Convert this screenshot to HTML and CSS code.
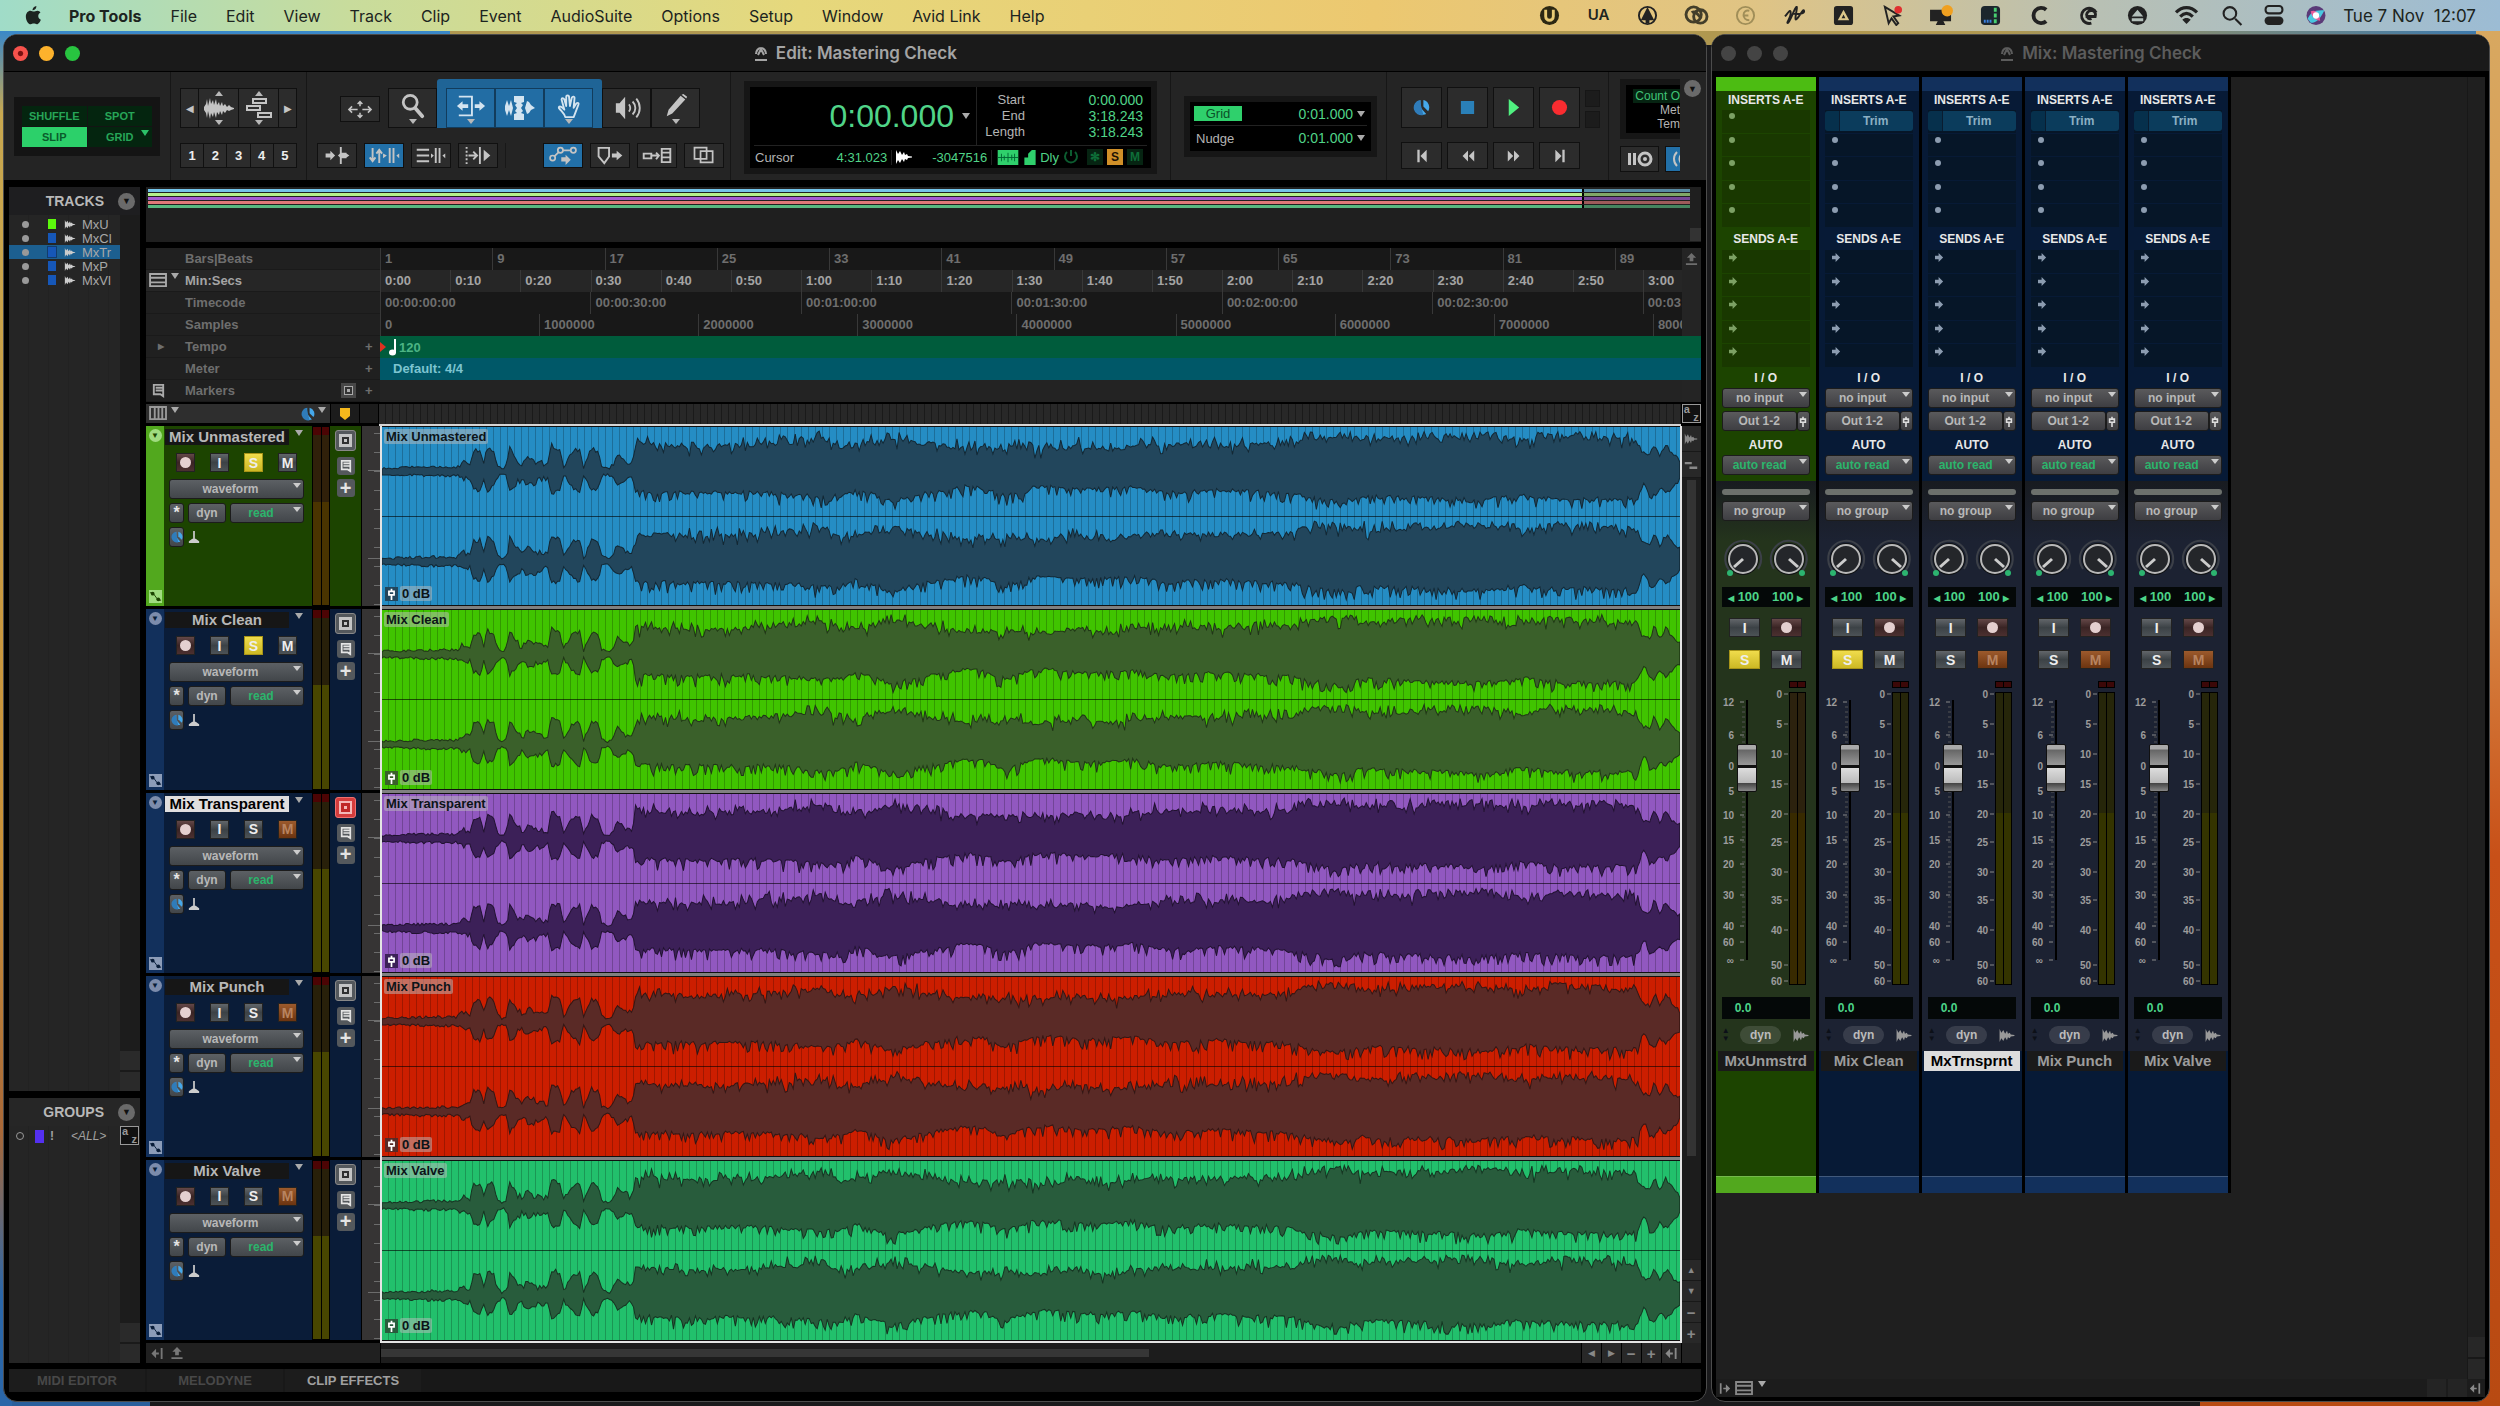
FILE: index.html
```html
<!DOCTYPE html>
<html lang="en">
<head>
    <meta charset="utf-8">
    <title>Pro Tools</title>
    <link rel="stylesheet" href="styles.css">
</head>
<body>
    <!-- Icon sprite -->
    <svg class="sprite" aria-hidden="true">
        <symbol id="apple" viewBox="0 0 18 22"><path fill="currentColor" d="M12.5 1c.1 1.600-.5 2.700-1.300 3.500-.8.8-1.800 1.200-2.700 1.100-.1-1.300.5-2.500 1.300-3.300C10.500 1.600 11.600 1.100 12.500 1zM16.800 7.800c-1.500.9-2.300 2.100-2.300 3.700 0 1.900 1 3.200 2.700 3.900-.6 1.700-2.400 4.800-4.200 4.800-1.100 0-1.800-.7-3.200-.7s-2.100.7-3.200.7C4.200 20.200 1.500 16 1.500 12.200c0-3.900 2.300-6.200 4.800-6.200 1.400 0 2.500.9 3.500.9.900 0 2.200-1 4-1 1.200 0 2.300.8 3 1.900z"/></symbol>
        <symbol id="wave" viewBox="0 0 30 22"><path fill="currentColor" d="M0 10l2-3 1-5 1 7 2-8 1 6 2-4 1 5 2-6 1 6 2-3 1 4 2-4 1 4 2-2 2 3 2-2 2 2 3 1v1l-3 1-2 1-2-1-2 3-2-2-1 4-2-4-1 4-2-3-1 6-2-6-1 5-2-4-1 6-2-8-1 7-1-5-2-3z"/></symbol>
        <symbol id="clip-wave" viewBox="0 0 18 14"><path fill="currentColor" d="M1 0l2 4 2-3 2 4 2-3 1 3 2-1 1 2 4 .5v1l-4 .5-1 2-2-1-1 3-2-3-2 4-2-3-2 4z"/></symbol>
        <symbol id="midi" viewBox="0 0 28 24"><path fill="none" stroke="currentColor" stroke-width="2" d="M8 3h13v4H8zM2 10h13v4H2zM13 17h13v4H13z"/></symbol>
        <symbol id="move" viewBox="0 0 32 24"><path fill="none" stroke="currentColor" stroke-width="2" d="M2 12h11M19 12h11M6 8l-4 4 4 4M26 8l4 4-4 4M16 2v6M16 16v6M13 5l3-3 3 3M13 19l3 3 3-3"/></symbol>
        <symbol id="magnify" viewBox="0 0 28 28"><circle cx="11" cy="10" r="7.500" fill="none" stroke="currentColor" stroke-width="3"/><path stroke="currentColor" stroke-width="4" stroke-linecap="round" d="M17 17l7 8"/></symbol>
        <symbol id="trim" viewBox="0 0 32 26"><path fill="none" stroke="currentColor" stroke-width="2" d="M3 3h14v20H3"/><path fill="currentColor" d="M1 13l6-5v3h6v4H7v3zM31 13l-6-5v3h-5v4h5v3z"/></symbol>
        <symbol id="selector" viewBox="0 0 30 26"><path fill="currentColor" d="M0 11l2-6 2 6 2-6 2 8-2 8-2-6-2 6-2-6zM30 13l-4-3-2-3-2-1-2 7 2 6 2-1 2-3z"/><path fill="currentColor" d="M9 1h10v6l-3 1 2 2-2 3 2 3-2 2 3 1v6H9v-6l3-1-2-2 2-3-2-3 2-2-3-1z"/></symbol>
        <symbol id="hand" viewBox="0 0 26 28"><path fill="none" stroke="currentColor" stroke-width="2" stroke-linejoin="round" stroke-linecap="round" d="M9 26c-1-4-4-6-7-10 0-2 2-2 4 0l2 2L5 7c0-2 2-2 3 0l2 7V4c0-2 3-2 3 0l1 10 2-9c1-2 3-1 3 0l-1 11 3-5c2-1 3 0 2 2-2 5-3 8-5 13z"/></symbol>
        <symbol id="speaker" viewBox="0 0 30 28"><path fill="currentColor" d="M3 9h4l6-7v24l-6-7H3z"/><path fill="none" stroke="currentColor" stroke-width="2" d="M17 10c2 2 2 6 0 8M21 7c4 4 4 10 0 14M25 4c5 6 5 14 0 20"/></symbol>
        <symbol id="pencil" viewBox="0 0 26 28"><path fill="currentColor" d="M3 25l2-7L18 3l5 4L9 22zM19 2l2-1 4 3-1 2z"/></symbol>
        <symbol id="trans" viewBox="0 0 26 20"><path fill="currentColor" d="M1 8h5V5l5 5-5 5v-3H1zM16 1h2v18h-2z"/><path fill="currentColor" d="M14 10l3-3h6v1l3 2-3 2v1h-6z"/></symbol>
        <symbol id="link-tl" viewBox="0 0 32 20"><path fill="none" stroke="currentColor" stroke-width="2" d="M4 2v13M1 12l3 4 3-4M11 18V4M8 8l3-4 3 4M22 2v16M26 2v16"/><path fill="currentColor" d="M15 8l4 2-4 3zM32 8l-3 2 3 3z"/></symbol>
        <symbol id="link-tr" viewBox="0 0 32 20"><path fill="none" stroke="currentColor" stroke-width="2" d="M1 4h13M1 10h13M1 16h13M21 2v16M25 2v16"/><path fill="currentColor" d="M16 8l3 2-3 3zM31 8l-3 2 3 3z"/></symbol>
        <symbol id="insert-follow" viewBox="0 0 28 20"><path fill="none" stroke="currentColor" stroke-width="2" d="M2 1v18" stroke-dasharray="2 2"/><path fill="none" stroke="currentColor" stroke-width="2" d="M4 10h8M9 6l4 4-4 4M16 1v18"/><path fill="currentColor" d="M20 4l7 6-7 6z"/></symbol>
        <symbol id="auto-follow" viewBox="0 0 32 22"><g fill="none" stroke="currentColor" stroke-width="2"><circle cx="4" cy="14" r="3"/><circle cx="13" cy="5" r="3"/><circle cx="28" cy="5" r="3"/><path d="M6 12l5-5M16 5h9"/></g><path fill="currentColor" d="M14 13h5v-3l6 6-6 6v-4h-5z"/></symbol>
        <symbol id="marker-follow" viewBox="0 0 28 20"><path fill="none" stroke="currentColor" stroke-width="2" d="M2 2h11v9l-5 7-6-7z"/><path fill="currentColor" d="M16 8h5V5l6 5-6 5v-3h-5z"/></symbol>
        <symbol id="mirror" viewBox="0 0 30 20"><path fill="none" stroke="currentColor" stroke-width="2" d="M1 8h8v5H1zM10 10h7M14 7l3 3-3 4M20 3h9v4h-9zM20 7h9v5h-9zM20 12h9v5h-9z"/></symbol>
        <symbol id="layer" viewBox="0 0 26 22"><path fill="none" stroke="currentColor" stroke-width="2" d="M2 2h14v13H2zM9 6h14v13H9z"/></symbol>
        <symbol id="clock" viewBox="0 0 18 18"><path fill="#45a8ea" d="M8 1v8l6 7A8 8 0 0 1 8 1z"/><path fill="#2f7cba" d="M7 1a8 8 0 0 0 4 16z"/><path fill="#45a8ea" d="M11 1a8 8 0 0 1 5 12l-5-5z"/></symbol>
        <symbol id="to-start" viewBox="0 0 18 18"><path fill="currentColor" d="M3 1h3v16H3zM15 1v16L7 9z"/></symbol>
        <symbol id="rewind" viewBox="0 0 18 18"><path fill="currentColor" d="M9 2v14L2 9zM17 2v14l-7-7z"/></symbol>
        <symbol id="metro" viewBox="0 0 14 16"><path fill="currentColor" d="M6 1h2v9h1l4 3v2H1v-2l4-3h1z"/></symbol>
        <symbol id="comment" viewBox="0 0 14 16"><path fill="none" stroke="currentColor" stroke-width="2" d="M2 2h10v12l-3-2H2zM4 5h7M4 8h7"/></symbol>
        <symbol id="fader" viewBox="0 0 10 14"><path fill="none" stroke="currentColor" stroke-width="2" d="M5 1v3M5 8v6M2 4h6v4H2z"/></symbol>
        <symbol id="automation" viewBox="0 0 14 14"><path fill="none" stroke="currentColor" stroke-width="1" d="M1 3h3l6 8h3"/><circle cx="4" cy="4" r="2" fill="currentColor"/><circle cx="10" cy="10" r="2" fill="currentColor"/></symbol>
        <symbol id="rows" viewBox="0 0 20 16"><path fill="none" stroke="currentColor" stroke-width="2" d="M1 1h17v13H1zM1 5h17M1 10h17"/></symbol>
        <symbol id="cols" viewBox="0 0 20 16"><path fill="none" stroke="currentColor" stroke-width="2" d="M1 1h17v13H1zM6 1v13M10 1v13M14 1v13"/></symbol>
        <symbol id="upload" viewBox="0 0 14 14"><path fill="currentColor" d="M7 0l5 5H9v4H5V5H2zM1 11h12v2H1z"/></symbol>
        <symbol id="edge" viewBox="0 0 14 14"><path fill="currentColor" d="M1 7l5-5v4h3v2H6v4zM11 1h2v12h-2z"/></symbol>
        <symbol id="send" viewBox="0 0 10 10"><path fill="currentColor" d="M0 3h4V0l5 5-5 5V7H0z"/></symbol>
        <symbol id="app" viewBox="0 0 16 20"><path fill="none" stroke="currentColor" stroke-width="2" d="M3 11a5 6 0 1 1 10 0M5 12l3-6 3 6"/><path fill="currentColor" d="M2 16h12v2H2z"/></symbol>
    </svg>

    <header class="menubar">
        <nav class="menus">
            <a href="#" class="apple" aria-label="Apple"><svg><use href="#apple"/></svg></a>
            <a href="#" class="app-name">Pro Tools</a>
            <a href="#">File</a>
            <a href="#">Edit</a>
            <a href="#">View</a>
            <a href="#">Track</a>
            <a href="#">Clip</a>
            <a href="#">Event</a>
            <a href="#">AudioSuite</a>
            <a href="#">Options</a>
            <a href="#">Setup</a>
            <a href="#">Window</a>
            <a href="#">Avid Link</a>
            <a href="#">Help</a>
        </nav>
        <div class="status">
            <svg viewBox="0 0 22 22"><circle cx="11" cy="11" r="10" fill="#2c2813"/><path d="M7 5v7a4 4 0 0 0 8 0V5" fill="none" stroke="#e8ca74" stroke-width="3"/></svg>
            <b>UA</b>
            <svg viewBox="0 0 22 22"><circle cx="11" cy="11" r="9" fill="none" stroke="#222" stroke-width="2"/><path d="M11 2l7 14h-5v3H9v-3H4z" fill="#222"/></svg>
            <svg viewBox="0 0 26 22"><g fill="none" stroke="#433e2a" stroke-width="3"><circle cx="10" cy="10" r="8"/><circle cx="17" cy="12" r="7"/><path d="M8 8c4-3 7 3 10 6"/></g></svg>
            <svg viewBox="0 0 22 22"><g fill="none" stroke="#a08e58" stroke-width="2"><circle cx="11" cy="11" r="9"/><path d="M15 6c-8-2-8 10 0 10M8 11h6"/></g></svg>
            <svg viewBox="0 0 24 22"><path d="M2 12c5-6 6-8 6-3s-5 10-3 10 7-16 9-17-3 15 0 13 7-12 8-9-5 4-12 3" fill="none" stroke="#222" stroke-width="2"/></svg>
            <svg viewBox="0 0 22 22"><rect x="1" y="1" width="20" height="20" rx="3" fill="#222"/><path d="M11 5l6 11H5z" fill="#dcc78a"/><path d="M11 10l2 4H9z" fill="#222"/></svg>
            <svg viewBox="0 0 22 22"><path d="M3 2l15 9-6 1 5 7-2 2-5-7-3 5z" fill="none" stroke="#222" stroke-width="2"/><circle cx="17" cy="5" r="4" fill="#e03030"/></svg>
            <svg viewBox="0 0 26 22"><path d="M1 5h22v12H1zM9 17h6l2 4H7z" fill="#222"/><circle cx="19" cy="6" r="6" fill="#f0a020"/></svg>
            <svg viewBox="0 0 22 22"><rect x="1" y="1" width="20" height="20" rx="4" fill="#1c262c"/><path d="M16 3v4M16 9v4M16 15v4" stroke="#48d070" stroke-width="3"/><path d="M4 17h8" stroke="#3a80e0" stroke-width="3" stroke-dasharray="2 1"/></svg>
            <svg viewBox="0 0 22 22"><path d="M18 5a8 8 0 1 0 0 12" fill="none" stroke="#222" stroke-width="4"/></svg>
            <svg viewBox="0 0 22 22"><path d="M19 8a8 8 0 1 0-5 11M8 12h10c2-8-8-8-9-2 0 4 3 5 5 4" fill="none" stroke="#222" stroke-width="3"/></svg>
            <svg viewBox="0 0 22 22"><circle cx="11" cy="11" r="10" fill="#222"/><path d="M11 5l6 7H5zM5 14h12v3H5z" fill="#b4c0bb"/></svg>
            <svg viewBox="0 0 24 20"><path d="M2 7c6-6 14-6 20 0M6 11c4-4 8-4 12 0" fill="none" stroke="#222" stroke-width="3"/><path d="M12 18l-4-4c2-2 6-2 8 0z" fill="#222"/></svg>
            <svg class="near" viewBox="0 0 20 20"><circle cx="8" cy="8" r="6" fill="none" stroke="#222" stroke-width="2"/><path d="M13 13l6 6" stroke="#222" stroke-width="2"/></svg>
            <svg class="near" viewBox="0 0 20 20"><rect x="2" y="1" width="16" height="7" rx="3" fill="none" stroke="#222" stroke-width="2"/><rect x="1" y="11" width="18" height="8" rx="4" fill="#222"/></svg>
            <svg class="near" viewBox="0 0 20 20"><circle cx="10" cy="10" r="9" fill="#5a3a78"/><path d="M2 13c4-8 8-8 16-8-4 8-7 12-13 12z" fill="#48c8e0"/><path d="M5 6c5-2 8 2 9 9-4 0-8-3-9-9z" fill="#e85a9a"/><circle cx="10" cy="10" r="3" fill="#fff"/></svg>
            <time>Tue 7 Nov&nbsp; 12:07</time>
        </div>
    </header>

    <main class="desktop">
        <section class="window edit-window">
            <div class="titlebar">
                <div class="lights"><i class="close"></i><i class="min"></i><i class="max"></i></div>
                <h1><svg><use href="#app"/></svg>Edit: Mastering Check</h1>
            </div>

            <div class="toolbar">
                <div class="group modes">
                    <div class="mode-grid">
                        <button>SHUFFLE</button>
                        <button>SPOT</button>
                        <button class="on">SLIP</button>
                        <button class="arrow">GRID</button>
                    </div>
                </div>

                <div class="group zoom">
                    <div class="zoom-row">
                        <button aria-label="Zoom out">◀</button>
                        <button class="big" aria-label="Audio zoom"><svg><use href="#wave"/></svg></button>
                        <button class="big" aria-label="MIDI zoom"><svg><use href="#midi"/></svg></button>
                        <button aria-label="Zoom in">▶</button>
                    </div>
                    <div class="presets">
                        <button>1</button><button>2</button><button>3</button><button>4</button><button>5</button>
                    </div>
                </div>

                <div class="group tools">
                    <div class="tool-row">
                        <button class="move" aria-label="Zoom toggle"><svg><use href="#move"/></svg></button>
                        <button class="tool drop" aria-label="Zoomer"><svg><use href="#magnify"/></svg></button>
                        <div class="smart">
                            <button class="tool drop" aria-label="Trim"><svg><use href="#trim"/></svg></button>
                            <button class="tool" aria-label="Selector"><svg><use href="#selector"/></svg></button>
                            <button class="tool drop" aria-label="Grabber"><svg><use href="#hand"/></svg></button>
                        </div>
                        <button class="tool" aria-label="Scrubber"><svg><use href="#speaker"/></svg></button>
                        <button class="tool drop" aria-label="Pencil"><svg><use href="#pencil"/></svg></button>
                    </div>
                    <div class="option-row">
                        <button aria-label="Tab to transients"><svg><use href="#trans"/></svg></button>
                        <button class="on" aria-label="Link timeline"><svg><use href="#link-tl"/></svg></button>
                        <button aria-label="Link track"><svg><use href="#link-tr"/></svg></button>
                        <button aria-label="Insertion follows playback"><svg><use href="#insert-follow"/></svg></button>
                        <i class="split"></i>
                        <button class="on" aria-label="Automation follows edit"><svg><use href="#auto-follow"/></svg></button>
                        <button aria-label="Markers follow edit"><svg><use href="#marker-follow"/></svg></button>
                        <button aria-label="Mirrored editing"><svg><use href="#mirror"/></svg></button>
                        <button aria-label="Layered editing"><svg><use href="#layer"/></svg></button>
                    </div>
                </div>

                <div class="group counters">
                    <div class="lcd counter">
                        <div class="counter-top">
                            <div class="main-count">0:00.000<i class="tri"></i></div>
                            <dl>
                                <dt>Start</dt><dd>0:00.000</dd>
                                <dt>End</dt><dd>3:18.243</dd>
                                <dt>Length</dt><dd>3:18.243</dd>
                            </dl>
                        </div>
                        <div class="counter-bottom">
                            <span class="cur">Cursor</span>
                            <span class="cur-time">4:31.023</span>
                            <svg class="cur-wave"><use href="#clip-wave"/></svg>
                            <span class="cur-value">-3047516</span>
                            <svg class="chip-wave" viewBox="0 0 22 16"><path fill="#2fd06c" d="M0 0h22v16H0z"/><path stroke="#063" d="M0 8h22M4 4v8M7 6v5M11 3v10M15 5v6M18 4v8"/></svg>
                            <svg class="chip-note" viewBox="0 0 12 16"><path fill="#2fd06c" d="M0 8h4V4L8 0h4v16H0z"/></svg>
                            <span>Dly</span>
                            <svg class="chip-ring" viewBox="0 0 16 16"><path fill="none" stroke="#0c5c30" stroke-width="2" d="M4 3a6 6 0 1 0 8 0M8 1v6"/></svg>
                            <span class="chip dim">✻</span>
                            <span class="chip solo">S</span>
                            <span class="chip dim">M</span>
                        </div>
                    </div>
                </div>

                <div class="group gridnudge">
                    <div class="lcd gn">
                        <div class="gn-row"><button class="grid-on">Grid</button><span>0:01.000<i class="tri"></i></span></div>
                        <div class="gn-row"><em>Nudge</em><span>0:01.000<i class="tri"></i></span></div>
                    </div>
                </div>

                <div class="group transport">
                    <div class="transport-row">
                        <button aria-label="Online"><svg><use href="#clock"/></svg></button>
                        <button aria-label="Stop"><svg viewBox="0 0 18 18"><path fill="#2a80b8" d="M2 2h14v14H2z"/></svg></button>
                        <button aria-label="Play"><svg viewBox="0 0 18 18"><path fill="#50f080" d="M4 0l11 9-11 9z"/></svg></button>
                        <button aria-label="Record"><svg viewBox="0 0 18 18"><circle cx="9" cy="9" r="8" fill="#fa2c30"/></svg></button>
                        <div class="lamps"><i></i><i></i></div>
                    </div>
                    <div class="transport-row low">
                        <button aria-label="Return to zero"><svg><use href="#to-start"/></svg></button>
                        <button aria-label="Rewind"><svg><use href="#rewind"/></svg></button>
                        <button class="flip" aria-label="Fast forward"><svg><use href="#rewind"/></svg></button>
                        <button class="flip" aria-label="Go to end"><svg><use href="#to-start"/></svg></button>
                    </div>
                </div>

                <div class="group countoff">
                    <div class="count-clip">
                        <div class="count-lcd">
                            <span class="lit">Count O</span>
                            <span>Met</span>
                            <span>Tem</span>
                        </div>
                        <div class="count-row">
                            <button aria-label="Wait for note"><svg viewBox="0 0 26 18"><path fill="currentColor" d="M1 3h3v12H1zM6 3h3v12H6z"/><circle cx="18" cy="9" r="6" fill="none" stroke="currentColor" stroke-width="3"/><circle cx="18" cy="9" r="2" fill="currentColor"/></svg></button>
                            <button class="on" aria-label="Metronome"><svg viewBox="0 0 26 18"><path fill="none" stroke="currentColor" stroke-width="2" d="M5 2c-4 4-4 10 0 14M9 5c-2 2-2 6 0 8"/></svg></button>
                        </div>
                    </div>
                    <button class="round" aria-label="Toolbar menu">▼</button>
                </div>
            </div>

            <div class="edit-body">
                <aside class="sidebar">
                    <div class="panel tracks-panel">
                        <h2>TRACKS<button class="round" aria-label="Tracks menu">▼</button></h2>
                        <div class="panel-body">
                            <ul id="trackList"></ul>
                            <div class="rail"><i></i></div>
                        </div>
                    </div>
                    <div class="panel groups-panel">
                        <h2>GROUPS<button class="round" aria-label="Groups menu">▼</button></h2>
                        <div class="panel-body">
                            <ul>
                                <li class="group-item"><i class="ring"></i><i class="swatch"></i><b>!</b><em>&lt;ALL&gt;</em></li>
                            </ul>
                            <div class="rail"><span class="az"><b>a</b><b>z</b></span><i></i></div>
                        </div>
                    </div>
                </aside>

                <div class="timeline">
                    <div class="universe">
                        <div class="bands"><i></i><i></i><i></i><i></i><i></i></div>
                        <b></b>
                    </div>

                    <div class="rulers" id="rulers"></div>

                    <div class="strip-head">
                        <div class="view-cell"><svg><use href="#cols"/></svg><i class="tri"></i><svg class="clk"><use href="#clock"/></svg><i class="tri"></i></div>
                        <div class="marker-cell"><svg viewBox="0 0 12 14"><path fill="#f5b81c" d="M1 1h10v8l-5 4-5-4z"/></svg></div>
                        <div class="blank-cell"></div>
                        <div class="beat-cell"></div>
                        <span class="az"><b>a</b><b>z</b></span>
                    </div>

                    <div class="lanes">
                        <div class="tracks" id="tracks"></div>
                        <div class="vscroll">
                            <button aria-label="Waveform zoom"><svg><use href="#clip-wave"/></svg></button>
                            <button aria-label="MIDI height"><svg viewBox="0 0 18 14"><path fill="currentColor" d="M1 3h9v3H1zM7 9h10v3H7z"/></svg></button>
                            <div class="vtrack"><i></i></div>
                            <button aria-label="Scroll up">▲</button>
                            <button aria-label="Scroll down">▼</button>
                            <button class="sign" aria-label="Shrink">−</button>
                            <button class="sign" aria-label="Grow">+</button>
                        </div>
                    </div>

                    <div class="hscroll">
                        <div class="hleft"><svg><use href="#edge"/></svg><svg><use href="#upload"/></svg></div>
                        <div class="htrack"><i></i></div>
                        <button aria-label="Scroll left">◀</button>
                        <button aria-label="Scroll right">▶</button>
                        <button class="sign" aria-label="Zoom out">−</button>
                        <button class="sign" aria-label="Zoom in">+</button>
                        <button aria-label="Hide"><svg><use href="#edge"/></svg></button>
                        <i class="corner"></i>
                    </div>
                </div>
            </div>

            <div class="tabs">
                <button>MIDI EDITOR</button>
                <button>MELODYNE</button>
                <button class="on">CLIP EFFECTS</button>
            </div>
        </section>

        <section class="window mix-window">
            <div class="titlebar dim">
                <div class="lights"><i></i><i></i><i></i></div>
                <h1><svg><use href="#app"/></svg>Mix: Mastering Check</h1>
            </div>
            <div class="mix-body">
                <div class="strips" id="strips"></div>
                <div class="mix-rail"><i></i></div>
            </div>
            <div class="mix-foot">
                <svg class="flip"><use href="#edge"/></svg>
                <svg class="list"><use href="#rows"/></svg><i class="tri"></i>
                <div class="foot-end"><i></i><i></i><svg><use href="#edge"/></svg></div>
            </div>
        </section>
    </main>

    <script src="script.js"></script>
</body>
</html>
```

FILE: styles.css
```css
* {
    box-sizing: border-box;
}

body {
    margin: 0;
    height: 100vh;
    display: flex;
    flex-direction: column;
    overflow: hidden;
    font-family: "Liberation Sans", Arial, sans-serif;
    font-size: 12px;
    color: #a8a8a8;
    background: linear-gradient(to right, #2a5f9c 6%, #1a1a1c 6%, #1a1a1c 88%, #b84a12 88%);
}

h1, h2, ul, dl, dd {
    margin: 0;
    padding: 0;
}

ul {
    list-style: none;
}

button, select, input {
    font: inherit;
    color: inherit;
    margin: 0;
    padding: 0;
    border: 0;
    background: none;
    border-radius: 0;
    appearance: none;
}

button {
    display: flex;
    align-items: center;
    justify-content: center;
}

i, em {
    font-style: normal;
}

.sprite {
    position: absolute;
    width: 0;
    height: 0;
}

.tri {
    display: inline-block;
    border: 4px solid transparent;
    border-top: 6px solid #aaa;
    border-bottom: 0;
}

.round {
    width: 17px;
    height: 17px;
    border-radius: 50%;
    background: #6a6a6a;
    color: #111;
    font-size: 9px;
}

/* menu bar */
.menubar {
    height: 31px;
    flex: none;
    display: flex;
    justify-content: space-between;
    align-items: center;
    padding: 0 24px;
    font-family: Inter, sans-serif;
    font-size: 16px;
    color: #1c2420;
    background: linear-gradient(to right, #a0dcc8, #c8dc9c 14%, #e6d87c 32%, #ecc870 55%, #e0c484 70%, #b8c0b4 84%, #9cbcd4);
}

.menus {
    display: flex;
    align-items: center;
    gap: 29px;
}

.menus a {
    color: inherit;
    text-decoration: none;
}

.apple {
    width: 16px;
}

.apple svg {
    display: block;
    width: 18px;
    height: 21px;
}

.app-name {
    font-weight: 700;
}

.status {
    display: flex;
    align-items: center;
    font-size: 15px;
}

.status svg,
.status b {
    width: 49px;
    height: 21px;
    text-align: center;
    font-weight: 600;
}

.status .near {
    width: 42px;
}

.status time {
    margin-left: 6px;
    font-size: 17px;
}

/* windows */
.desktop {
    flex: 1;
    min-height: 0;
    display: grid;
    grid-template-columns: 1703fr 779fr;
    gap: 4px;
    padding: 3px 10px 4px 3px;
    background:
        linear-gradient(#3a88c8, #c8a850 6%, #c89038 60%, #a86838 80%, #2a66a8 92%) left / 12px 100% no-repeat,
        linear-gradient(#d8a860, #d88c48 40%, #c85018 60%, #b84a12) right / 24px 100% no-repeat,
        linear-gradient(to right, #3a88c8 18%, #b09850 18%, #b09850 80%, #3878b0) top / 100% 14px no-repeat;
}

.window {
    min-width: 0;
    display: flex;
    flex-direction: column;
    border: 1px solid #4c4c4c;
    border-radius: 14px;
    background: #000;
    overflow: hidden;
}

.titlebar {
    height: 37px;
    flex: none;
    display: grid;
    grid-template-columns: 1fr auto 1fr;
    align-items: center;
    padding: 0 9px;
    background: #1a1a1a;
    border-bottom: 1px solid #000;
}

.titlebar h1 {
    display: flex;
    align-items: center;
    gap: 7px;
    font: 600 17px Inter, sans-serif;
    color: #a4a4a4;
}

.titlebar h1 svg {
    width: 16px;
    height: 20px;
}

.titlebar.dim h1 {
    color: #5c5c5c;
}

.lights {
    display: flex;
    gap: 11px;
}

.lights i {
    width: 15px;
    height: 15px;
    border-radius: 50%;
    background: #444;
}

.lights .close {
    background: radial-gradient(#7a1010 20%, #f8524c 30%);
}

.lights .min {
    background: #fdb22c;
}

.lights .max {
    background: #28c440;
}

/* toolbar */
.toolbar {
    height: 108px;
    flex: none;
    display: flex;
    background: #242424;
}

.group {
    flex: none;
    padding-top: 7px;
    border-right: 1px solid #161616;
}

.toolbar .group button {
    color: #c4c4c4;
}

.modes {
    width: 167px;
    padding: 25px 10px;
}

.mode-grid {
    display: grid;
    grid-template-columns: 1fr 1fr;
    grid-template-rows: 20px 20px;
    gap: 1px;
    padding: 9px 8px;
    background: #141414;
}

.mode-grid button {
    position: relative;
    background: #04250f;
    font-weight: 700;
    font-size: 11px;
}

.toolbar .mode-grid button {
    color: #27a558;
}

.toolbar .mode-grid .on {
    background: #2cd06a;
    color: #0a5c2c;
}

.mode-grid .arrow::after {
    content: "";
    position: absolute;
    right: 3px;
    top: 3px;
    border: 4px solid transparent;
    border-top: 6px solid #2cc068;
    border-bottom: 0;
}

.zoom {
    width: 136px;
    padding: 16px 9px 0;
}

.zoom-row,
.presets {
    display: flex;
    border: 1px solid #101010;
    background: #101010;
    gap: 1px;
}

.zoom-row {
    height: 40px;
    margin-bottom: 15px;
}

.zoom-row button,
.presets button {
    flex: 1;
    background: #2c2c2c;
    font-size: 10px;
}

.zoom-row .big {
    flex: 0 0 39px;
    flex-direction: column;
}

.big::before,
.big::after,
.drop::after {
    content: "";
    border: 4px solid transparent;
    border-top: 5px solid #b8b8b8;
    border-bottom: 0;
}

.big::before {
    border: 4px solid transparent;
    border-bottom: 5px solid #b8b8b8;
    border-top: 0;
}

.big svg {
    width: 30px;
    height: 24px;
}

.presets {
    height: 25px;
}

.toolbar .presets button {
    font-size: 13px;
    font-weight: 700;
    color: #eee;
}

.tools {
    width: 424px;
    padding: 7px 6px 0 10px;
}

.tool-row {
    display: flex;
    height: 49px;
    align-items: flex-end;
    padding-left: 23px;
    margin-bottom: 15px;
}

.move {
    width: 40px;
    height: 26px;
    border: 1px solid #101010;
    background: #2c2c2c;
    margin: 0 8px 6px 0;
}

.move svg,
.option-row svg {
    width: 32px;
    height: 19px;
}

.tool {
    width: 49px;
    height: 40px;
    border: 1px solid #101010;
    background: #2c2c2c;
    flex-direction: column;
}

.tool svg {
    width: 30px;
    height: 26px;
}

.smart {
    display: flex;
    align-items: flex-end;
    height: 49px;
    padding: 0 9px;
    background: #1f6496;
    border-radius: 3px 3px 0 0;
}

.smart .tool {
    background: #226da4;
    border-color: #123c5c;
}

.toolbar .smart button {
    color: #d4e4f0;
}

.option-row {
    display: flex;
    justify-content: space-between;
}

.option-row button {
    width: 40px;
    height: 25px;
    border: 1px solid #101010;
    background: #2c2c2c;
}

.option-row .on,
.count-row .on {
    background: #2270a8;
}

.split {
    width: 32px;
    border-left: 1px solid #181818;
}

.lcd {
    background: #000;
    border: 6px solid #161616;
    color: #50d488;
}

.counters {
    width: 440px;
    padding: 9px 13px;
}

.counter {
    height: 93px;
}

.counter-top {
    height: 59px;
    display: flex;
    margin: 0 4px;
    border-bottom: 1px solid #222;
}

.main-count {
    flex: 1;
    display: flex;
    align-items: center;
    justify-content: flex-end;
    gap: 8px;
    padding-right: 6px;
    font-size: 32px;
    border-right: 1px solid #222;
}

.counter dl {
    width: 170px;
    display: grid;
    grid-template-columns: 48px 1fr;
    grid-template-rows: 16px 16px 16px;
    align-content: center;
    padding-right: 4px;
    text-align: right;
    font-size: 14px;
    line-height: 16px;
}

.counter dt {
    color: #b4b4b4;
    font-size: 13px;
}

.counter-bottom {
    display: flex;
    align-items: center;
    height: 22px;
    padding: 0 8px 0 5px;
    font-size: 13px;
}

.cur {
    color: #b4b4b4;
}

.cur-time {
    flex: 1;
    text-align: right;
    border-right: 1px solid #222;
    padding-right: 4px;
}

.cur-wave {
    width: 20px;
    height: 14px;
    margin: 0 2px;
    color: #fff;
}

.cur-value {
    width: 76px;
    text-align: right;
    padding-right: 4px;
    margin-right: 5px;
    border-right: 1px solid #222;
}

.chip-wave {
    width: 22px;
    height: 15px;
    margin-right: 5px;
}

.chip-note {
    width: 12px;
    height: 15px;
    margin-right: 4px;
}

.chip-ring {
    width: 16px;
    height: 16px;
    margin: 0 4px;
}

.chip {
    width: 16px;
    height: 16px;
    line-height: 16px;
    margin-left: 4px;
    text-align: center;
    font-weight: 700;
    font-size: 12px;
}

.chip.dim {
    background: #062412;
    color: #0e6e38;
}

.chip.solo {
    background: #d09028;
    color: #1c1204;
}

.gridnudge {
    width: 216px;
    padding: 24px 9px 0 13px;
}

.gn {
    height: 61px;
    padding: 0 4px;
}

.gn-row {
    height: 24px;
    display: flex;
    align-items: center;
    justify-content: space-between;
    font-size: 14px;
}

.gn-row:first-child {
    border-bottom: 1px solid #222;
}

.gn-row em {
    color: #b4b4b4;
    padding-left: 2px;
    font-size: 13px;
}

.gn-row .tri {
    margin: 0 2px 2px 4px;
}

.toolbar .group .grid-on {
    width: 48px;
    height: 15px;
    background: #2fd06c;
    color: #0a5028;
    font-size: 13px;
}

.transport {
    width: 222px;
    padding: 15px 8px 0 14px;
}

.transport-row {
    display: flex;
    gap: 5px;
    margin-bottom: 14px;
}

.transport-row button {
    width: 41px;
    height: 41px;
    border: 1px solid #101010;
    background: #2c2c2c;
}

.transport-row.low button {
    height: 27px;
}

.transport-row svg {
    width: 17px;
    height: 17px;
}

.low svg {
    width: 14px;
    height: 14px;
}

.flip svg,
svg.flip {
    transform: scaleX(-1);
}

.lamps {
    display: flex;
    flex-direction: column;
    gap: 4px;
    padding-top: 3px;
}

.lamps i {
    width: 15px;
    height: 17px;
    background: #1c1c1c;
    border: 1px solid #161616;
}

.countoff {
    flex: 1;
    display: flex;
    gap: 4px;
    border: 0;
    padding: 7px 0 0 11px;
    min-width: 0;
}

.count-clip {
    width: 60px;
    overflow: hidden;
}

.count-lcd {
    display: flex;
    flex-direction: column;
    align-items: flex-end;
    height: 60px;
    padding-top: 4px;
    border: 6px solid #161616;
    border-right: 0;
    background: #000;
    font-size: 12px;
    line-height: 14px;
    color: #b4b4b4;
}

.count-lcd .lit {
    color: #40c478;
    background: #062412;
    padding-left: 2px;
}

.count-row {
    display: flex;
    gap: 6px;
    margin-top: 7px;
}

.count-row button {
    flex: 0 0 39px;
    height: 26px;
    border: 1px solid #101010;
    background: #2c2c2c;
}

.count-row svg {
    width: 26px;
    height: 18px;
}

.group .round {
    margin-top: 1px;
}

.toolbar .group .round {
    color: #111;
}

/* edit body */
.edit-body {
    flex: 1;
    min-height: 0;
    display: grid;
    grid-template-columns: 131px 1fr;
    gap: 6px;
    padding: 7px 5px 0 5px;
}

.sidebar {
    display: flex;
    flex-direction: column;
    gap: 7px;
    min-height: 0;
}

.panel {
    display: flex;
    flex-direction: column;
    background: #242424;
}

.tracks-panel {
    flex: 904;
}

.groups-panel {
    flex: 265;
}

.panel h2 {
    height: 28px;
    display: flex;
    align-items: center;
    justify-content: flex-end;
    gap: 14px;
    padding-right: 5px;
    font-size: 14px;
    color: #b8b8b8;
    background: #1e1e20;
}

.groups-panel h2 {
    background: #262626;
}

.panel-body {
    flex: 1;
    display: grid;
    grid-template-columns: 1fr 20px;
}

.panel-body ul {
    padding-top: 2px;
    background: repeating-linear-gradient(to right, #252525 0 19px, #222 19px 20px);
}

.track-item {
    height: 14px;
    display: flex;
    align-items: center;
    font-size: 13px;
}

.track-item.sel {
    background: #1c5f90;
}

.track-item i {
    width: 7px;
    height: 7px;
    border-radius: 50%;
    background: #999;
    margin: 0 19px 0 13px;
}

.track-item b {
    width: 8px;
    height: 10px;
    background: #1657b8;
    margin-right: 8px;
}

.track-item.sel b {
    outline: 1px solid #123c6c;
}

.track-item b.lime {
    background: #5cf80c;
}

.track-item svg {
    width: 12px;
    height: 9px;
    margin-right: 6px;
    color: #ccc;
}

.rail {
    display: flex;
    flex-direction: column;
    justify-content: space-between;
    background: #1c1c1c;
}

.rail > i {
    height: 40px;
    margin-top: auto;
    background: linear-gradient(#2a2a2a 19px, #1a1a1a 19px 21px, #2a2a2a 21px);
}

.az {
    width: 19px;
    height: 19px;
    display: flex;
    justify-content: space-between;
    padding: 0 1px;
    border: 1px solid #999;
    background: #111;
    font-size: 11px;
    line-height: 9px;
    color: #999;
}

.az b:last-child {
    align-self: flex-end;
}

.group-item {
    display: flex;
    align-items: center;
    height: 16px;
    font-size: 12px;
    color: #a0a0a0;
}

.group-item em {
    font-style: italic;
    margin-left: 17px;
}

.ring {
    width: 8px;
    height: 8px;
    margin: 0 11px 0 7px;
    border: 1px solid #999;
    border-radius: 50%;
}

.swatch {
    width: 9px;
    height: 13px;
    margin-right: 6px;
    background: #5430f0;
}

.timeline {
    min-width: 0;
    min-height: 0;
    display: flex;
    flex-direction: column;
}

.universe {
    height: 55px;
    flex: none;
    display: flex;
    align-items: flex-end;
    justify-content: space-between;
    padding: 0 0 1px 2px;
    margin-bottom: 6px;
    background: #1f1f1f;
}

.bands {
    flex: 1;
    align-self: flex-start;
    display: flex;
    flex-direction: column;
    gap: 1px;
    padding-top: 2px;
}

.bands i {
    height: 3px;
    background: linear-gradient(to right, var(--band) 93%, #000 93% calc(93% + 2px), color-mix(in srgb, var(--band) 65%, #222) calc(93% + 2px));
}

.bands i:nth-child(1) { --band: #74c4ea; }
.bands i:nth-child(2) { --band: #b4f08c; }
.bands i:nth-child(3) { --band: #a45cd4; }
.bands i:nth-child(4) { --band: #e07878; }
.bands i:nth-child(5) { --band: #58b880; }

.universe b {
    width: 11px;
    height: 13px;
    background: #333;
}

.rulers {
    flex: none;
    margin-bottom: 2px;
}

.ruler {
    height: 22px;
    display: grid;
    grid-template-columns: 234px 1fr 19px;
    font-size: 13px;
    font-weight: 700;
    color: #6e6e6e;
    background: #181818;
}

.ruler-label {
    display: grid;
    grid-template-columns: 39px 1fr 24px 10px;
    align-items: center;
    padding-right: 5px;
    background: #202020;
    border-bottom: 1px solid #1a1a1a;
}

.ruler-label svg {
    width: 19px;
    height: 15px;
    color: #aaa;
    margin-left: 3px;
}

.ruler-label .lead {
    display: flex;
    gap: 3px;
}

.ruler-label .expand {
    margin-left: 12px;
    font-size: 8px;
}

.target {
    display: block;
    width: 15px;
    height: 15px;
    border: 3px solid #484848;
    background: #aaa;
    box-shadow: inset 0 0 0 1px #aaa, inset 0 0 0 3px #333;
}

.marks {
    display: flex;
    overflow: hidden;
}

.marks span {
    flex: 0 0 var(--step);
    padding-left: 4px;
    line-height: 22px;
    border-left: 1px solid #383838;
    white-space: nowrap;
}

.bars { --step: 8.624%; }
.secs { --step: 5.392%; }
.timecode { --step: 16.17%; }
.samples { --step: 12.224%; }

.ruler-end {
    display: grid;
    place-items: center;
    background: #242424;
}

.ruler-end svg {
    width: 13px;
    height: 13px;
}

.ruler.min .ruler-label,
.ruler.min {
    color: #a4a4a4;
    background: #262626;
}

.ruler.tempo .marks,
.ruler.tempo .ruler-end {
    background: #005c3c;
    color: #4cb484;
    align-items: center;
}

.tempo .marks svg {
    width: 16px;
    height: 18px;
    margin-right: 3px;
}

.ruler.signature .marks,
.ruler.signature .ruler-end {
    background: #005868;
    color: #7cc4d0;
    padding-left: 13px;
    line-height: 22px;
}

.ruler.markers .marks {
    background: #232323;
}

.strip-head {
    height: 22px;
    flex: none;
    display: grid;
    grid-template-columns: 184px 28px 18px 1fr 19px;
    column-gap: 1px;
}

.strip-head > div {
    background: #2e2e2e;
    margin-bottom: 3px;
}

.view-cell {
    display: flex;
    align-items: center;
    gap: 3px;
    padding: 0 4px 0 3px;
}

.view-cell svg {
    width: 19px;
    height: 15px;
    color: #999;
}

.view-cell .tri {
    margin-bottom: 7px;
}

.view-cell .clk {
    margin-left: auto;
    width: 14px;
    height: 14px;
}

.strip-head .marker-cell,
.strip-head .blank-cell {
    background: #1c1c1c;
    display: grid;
    place-items: center;
}

.marker-cell svg {
    width: 12px;
    height: 14px;
}

.strip-head .beat-cell {
    margin: 0;
    border-bottom: 2px solid #d4d4d4;
    background: repeating-linear-gradient(to right, #282828 0 6px, #1a1a1a 6px 7px);
}

.lanes {
    flex: 1;
    min-height: 0;
    display: grid;
    grid-template-columns: 1fr 19px;
}

.tracks {
    display: grid;
    grid-auto-rows: 1fr;
}

/* one track */
.track {
    min-height: 0;
    display: grid;
    grid-template-columns: 18px 148px 18px 32px 18px 1fr;
}

.track > * {
    margin-bottom: 3px;
}

.stripe {
    display: flex;
    flex-direction: column;
    justify-content: space-between;
    align-items: center;
    padding: 3px 0;
    background: #12305c;
    color: #081c38;
}

.stripe button {
    width: 13px;
    height: 13px;
    border-radius: 50%;
    background: #7c8cac;
    font-size: 8px;
}

.stripe svg {
    width: 13px;
    height: 13px;
    background: #8c9cb8;
}

.controls {
    padding: 3px 9px 0 1px;
    background: #0a1c38;
}

.name-row {
    display: flex;
    gap: 6px;
    height: 16px;
    margin-bottom: 8px;
}

.name-row b {
    width: 129px;
    text-align: center;
    font-size: 15px;
    line-height: 16px;
    color: #b8b8b8;
    background: #161616;
    white-space: nowrap;
}

.track.sel .name-row b {
    background: #e0dede;
    color: #000;
}

.name-row .tri {
    margin-top: 1px;
}

.sq-row {
    display: flex;
    gap: 15px;
    padding-left: 11px;
    margin-bottom: 7px;
}

.sq {
    width: 19px;
    height: 19px;
    font-size: 14px;
    font-weight: 700;
    color: #eee;
    border: 1px solid #222;
    background: linear-gradient(#62666a, #3c4246 50%, #4c5256);
}

.rec {
    background: linear-gradient(#644848, #3a2424 50%, #4c3030);
}

.rec::before {
    content: "";
    width: 11px;
    height: 11px;
    border-radius: 50%;
    background: #e4d0d0;
}

.solo-on {
    background: linear-gradient(#f0dc4c, #ccb824);
    border-color: #a89418;
}

.mute-on {
    background: linear-gradient(#9c5a2c, #6c3410);
    color: #b88460;
}

.drop-box {
    position: relative;
    display: block;
}

.drop-box::after {
    content: "";
    position: absolute;
    right: 3px;
    top: 4px;
    border: 4px solid transparent;
    border-top: 5px solid #ccc;
    border-bottom: 0;
}

.drop-box select,
.pill {
    width: 100%;
    height: 20px;
    text-align: center;
    text-align-last: center;
    padding-right: 12px;
    font-size: 12px;
    font-weight: 700;
    color: #b8b8b8;
    border: 1px solid #1c1c1c;
    border-radius: 3px;
    background: linear-gradient(#5c6064, #42464a);
}

.drop-box select {
    display: block;
}

.pill {
    width: auto;
    padding: 0;
}

.pill.star {
    font-size: 16px;
    color: #e4e4e4;
}

.green-text select {
    color: #2cb46c;
}

.wide {
    width: 135px;
    margin: 0 0 4px 4px;
}

.pill-row {
    display: grid;
    grid-template-columns: 15px 38px 74px;
    column-gap: 4px;
    margin: 0 0 4px 4px;
    align-items: center;
}

.pill-row svg {
    width: 12px;
    height: 14px;
    color: #ccc;
}

.meter {
    display: flex;
    gap: 1px;
    padding: 1px;
    background: #000;
}

.meter i {
    flex: 1;
    background: linear-gradient(#4c0404 8px, #28200a 8px 42%, #484600 42%);
}

.side {
    display: flex;
    flex-direction: column;
    align-items: center;
    gap: 4px;
    padding-top: 4px;
    background: #0a1c38;
    border-right: 1px solid #000;
}

.side button {
    width: 18px;
    height: 18px;
    border-radius: 3px;
    background: #54585c;
    font-size: 20px;
    font-weight: 700;
    color: #e4e4e4;
}

.side svg {
    width: 12px;
    height: 14px;
}

.side button.first {
    width: 21px;
    height: 21px;
    border: 1px solid #888;
    margin-bottom: 2px;
}

.first::before {
    content: "";
    width: 13px;
    height: 13px;
    background: #c4c4c4;
    box-shadow: inset 0 0 0 3px #c4c4c4, inset 0 0 0 5px #303030;
}

.track.sel .first {
    background: #d43c3c;
    border-color: #f07070;
}

.track.sel .first::before {
    background: #f4b8b8;
    box-shadow: inset 0 0 0 2px #f4b8b8, inset 0 0 0 5px #c02828;
}

.scale {
    background:
        repeating-linear-gradient(to bottom, transparent 0 7px, #6c6c6c 7px 8px, transparent 8px 19px) right / 6px 100% no-repeat,
        repeating-linear-gradient(to bottom, transparent 0 44px, #6c6c6c 44px 45px, transparent 45px 88px) right / 12px 100% no-repeat,
        #363434;
}

.track.green .stripe {
    background: #52a81e;
    color: #1c4400;
}

.track.green .stripe button,
.track.green .stripe svg {
    background: #a0dc80;
}

.track.green .controls,
.track.green .side {
    background: #1c4400;
}

.track.green .meter i {
    background: linear-gradient(#4c0404 8px, #30200a 8px 42%, #4a3400 42%);
}

.lane {
    position: relative;
    margin-bottom: 0;
    border-left: 2px solid #e4e4e4;
    border-right: 2px solid #e4e4e4;
    background: #808080;
}

.track:last-child .lane {
    border-bottom: 2px solid #e4e4e4;
}

.clip {
    height: calc(100% - 3px);
    display: flex;
    flex-direction: column;
    border: solid #101010;
    border-width: 1px 0;
    background: repeating-linear-gradient(to right, transparent 0 6px, rgba(0, 0, 0, 0.22) 6px 7px) var(--clip);
}

.track:last-child .clip {
    height: 100%;
}

.clip svg.wf {
    width: 100%;
    flex: 1;
    min-height: 0;
    fill: var(--wf);
    stroke: color-mix(in srgb, var(--wf) 55%, #000);
}

.clip svg.wf:first-child {
    border-bottom: 1px solid rgba(0, 0, 0, 0.6);
}

.clip-name,
.clip-gain {
    position: absolute;
    left: 2px;
    top: 3px;
    padding: 0 2px;
    font-size: 13px;
    line-height: 15px;
    font-weight: 700;
    color: #0c1418;
    background: rgba(190, 190, 190, 0.5);
    border-radius: 2px;
}

.clip-gain {
    top: auto;
    bottom: 8px;
    left: 18px;
}

.lane .gain-icon {
    position: absolute;
    left: 3px;
    bottom: 8px;
    width: 13px;
    height: 14px;
    padding: 1px;
    color: #fff;
    background: var(--wf);
}

/* scrollbars */
.vscroll {
    display: flex;
    flex-direction: column;
    gap: 1px;
    background: #181818;
}

.vscroll button,
.hscroll button {
    height: 20px;
    flex: none;
    background: #282828;
    font-size: 9px;
    color: #888;
}

.vscroll .sign,
.hscroll .sign {
    font-size: 15px;
    font-weight: 700;
}

.vscroll svg {
    width: 14px;
    height: 12px;
}

.vscroll button:nth-child(-n+2) {
    height: 25px;
}

.vtrack {
    flex: 1;
    padding: 2px 5px;
    background: #1c1c1c;
}

.vtrack i {
    display: block;
    height: 87%;
    background: #333;
}

.hscroll {
    height: 20px;
    flex: none;
    display: flex;
    gap: 1px;
}

.hleft {
    width: 234px;
    display: flex;
    align-items: center;
    gap: 6px;
    padding-left: 4px;
    background: #202020;
    color: #777;
}

.hleft svg,
.hscroll button svg {
    width: 14px;
    height: 13px;
}

.htrack {
    flex: 1;
    padding: 6px 0;
    background: #1c1c1c;
}

.htrack i {
    display: block;
    width: 64%;
    height: 8px;
    background: #363636;
}

.hscroll button {
    width: 19px;
}

.corner {
    width: 19px;
    background: #222;
}

.tabs {
    flex: none;
    display: flex;
    gap: 2px;
    height: 23px;
    margin: 6px 5px 9px;
    background: #181818;
}

.tabs button {
    width: 136px;
    font-size: 13px;
    font-weight: 700;
    color: #484848;
    background: #1c1c1c;
}

.tabs .on {
    color: #a0a0a0;
}

/* mix window */
.mix-body {
    flex: 1;
    min-height: 0;
    display: flex;
    justify-content: space-between;
    margin: 5px 4px 0;
    background: #1f1f1f;
}

.strips {
    display: flex;
    align-items: flex-start;
}

.mix-rail {
    display: flex;
    width: 18px;
    border-left: 1px solid #181818;
    align-items: flex-end;
}

.mix-rail i {
    flex: 1;
    height: 42px;
    background: linear-gradient(#272727 20px, #181818 20px 22px, #272727 22px);
}

.strip {
    --top: #071a36;
    --slot: #061628;
    --low: #1c2232;
    --bar: #12305c;
    --mark: #8c9cb0;
    width: 103px;
    border-right: 3px solid #000;
    background: var(--top);
}

.strip.green {
    --top: #1c4400;
    --slot: #193800;
    --low: #24341c;
    --bar: #52a81e;
    --mark: #7ca064;
}

.bar-top {
    height: 14px;
    background: #12305c;
}

.green .bar-top {
    background: #4cbc12;
}

.strip h3 {
    margin: 0;
    height: 19px;
    line-height: 19px;
    font-size: 12px;
    text-align: center;
    color: #e8e8e8;
}

.strip h3.sends {
    height: 22px;
    line-height: 23px;
}

.strip h3.io-title {
    height: 20px;
    line-height: 21px;
}

.strip h3.auto-title {
    height: 24px;
    line-height: 28px;
}

.slots {
    height: 118px;
    display: grid;
    grid-template-rows: repeat(5, 1fr);
    margin: 0 6px;
    color: var(--mark);
}

.slots div {
    display: flex;
    padding: 3px 0 0 7px;
    background: var(--slot);
    border-bottom: 1px solid var(--top);
}

.slots i {
    width: 6px;
    height: 6px;
    border-radius: 50%;
    background: var(--mark);
}

.slots svg {
    width: 9px;
    height: 9px;
}

.slots .plug {
    padding: 1px 0 2px;
}

.plug button {
    flex: 1;
    padding-left: 14px;
    font-size: 12px;
    font-weight: 700;
    color: #8cb0c4;
    border-radius: 3px;
    background: linear-gradient(to right, #06304c 14px, #0a1c30 14px 15px, #0b3c5c 15px);
}

.io {
    display: grid;
    gap: 3px;
    margin: 0 6px;
}

.io .out {
    display: grid;
    grid-template-columns: 1fr 13px;
}

.strip select,
.io .out button {
    background: linear-gradient(#5a5a5c, #3e3e42);
}

.out .drop-box::after {
    display: none;
}

.out select {
    padding: 0;
}

.out svg {
    width: 8px;
    height: 13px;
    color: #ddd;
}

.lower {
    margin-top: 6px;
    padding: 8px 6px 0;
    background: linear-gradient(#181b20, var(--low) 60px);
}

.lower .color-bar {
    height: 6px;
    margin-bottom: 6px;
    border-radius: 3px;
    background: #6c706c;
}

.knobs {
    display: flex;
    justify-content: space-between;
    height: 66px;
    align-items: center;
    padding-top: 9px;
}

.knobs svg {
    width: 42px;
    height: 42px;
}

.knobs svg:last-child {
    transform: scaleX(-1);
}

.pan {
    display: flex;
    justify-content: space-around;
    height: 20px;
    line-height: 20px;
    font-size: 13px;
    font-weight: 700;
    color: #4cd488;
    background: #040808;
    margin-bottom: 11px;
}

.pan small {
    font-size: 8px;
}

.pair {
    display: flex;
    justify-content: center;
    gap: 11px;
    margin-bottom: 13px;
}

.pair .sq {
    width: 31px;
}

.fader-area {
    position: relative;
    height: 321px;
    margin: -6px -6px 0;
}

.fader-area svg {
    display: block;
    width: 100px;
    height: 321px;
    font-size: 10px;
    font-weight: 700;
    fill: #9c9c9c;
}

.fader-area input {
    position: absolute;
    left: 21px;
    top: 0;
    width: 20px;
    height: 308px;
    writing-mode: vertical-lr;
    direction: rtl;
}

.fader-area input::-webkit-slider-thumb {
    appearance: none;
    width: 20px;
    height: 48px;
    border: 1px solid #111;
    border-radius: 2px;
    background: linear-gradient(#aaa 4px, #666 5px, #999 44%, #111 44% 50%, #ddd 50%, #bbb 82%, #444 83%, #888);
}

.volume {
    height: 22px;
    padding-left: 13px;
    line-height: 22px;
    font-size: 12px;
    font-weight: 700;
    color: #4cd488;
    background: #040808;
}

.dyn-row {
    height: 32px;
    display: flex;
    align-items: center;
    justify-content: space-between;
    color: #999;
}

.dyn-row > span {
    font-size: 8px;
    line-height: 8px;
    color: #0c1018;
}

.dyn-row button {
    width: 41px;
    height: 18px;
    border-radius: 9px;
    font-size: 12px;
    font-weight: 700;
    color: #bbb;
    background: rgba(255, 255, 255, 0.12);
}

.dyn-row svg {
    width: 18px;
    height: 13px;
}

.strip-name {
    height: 20px;
    line-height: 20px;
    margin: 0 2px;
    text-align: center;
    font-size: 15px;
    font-weight: 700;
    color: #9c9c9c;
    background: #1a1a1a;
    white-space: nowrap;
}

.sel .strip-name {
    background: #dcdcdc;
    color: #000;
}

.notes {
    height: 105px;
    background: var(--top);
}

.bar-bottom {
    height: 17px;
    background: var(--bar);
    border-top: 1px solid rgba(255, 255, 255, 0.2);
}

.mix-foot {
    flex: none;
    display: flex;
    align-items: center;
    gap: 4px;
    height: 18px;
    margin: 0 4px 4px;
    padding-left: 3px;
    background: #1c1c1c;
    color: #888;
}

.mix-foot svg {
    width: 12px;
    height: 13px;
}

.mix-foot .list {
    width: 19px;
    height: 15px;
}

.mix-foot .tri {
    margin-bottom: 8px;
}

.foot-end {
    display: flex;
    align-items: center;
    gap: 2px;
    margin-left: auto;
    padding-right: 4px;
}

.foot-end i {
    width: 19px;
    height: 18px;
    background: #242424;
}
```

FILE: script.js
```js
const tracks = [
    { name: 'Mix Unmastered', short: 'MxUnmstrd', list: 'MxU', color: 'green', solo: true, clip: '#258dc4', wf: '#22465c' },
    { name: 'Mix Clean', short: 'Mix Clean', list: 'MxCl', solo: true, clip: '#40c400', wf: '#3a602a' },
    { name: 'Mix Transparent', short: 'MxTrnsprnt', list: 'MxTr', selected: true, clip: '#9158c0', wf: '#3c2058' },
    { name: 'Mix Punch', short: 'Mix Punch', list: 'MxP', clip: '#cc1e00', wf: '#5a2a26' },
    { name: 'Mix Valve', short: 'Mix Valve', list: 'MxVl', clip: '#22c06c', wf: '#285c3c' }
];

const icon = (id, cls = '') => `<svg class="${cls}"><use href="#${id}"/></svg>`;
const dropdown = (label, value, cls = '') =>
    `<label class="drop-box ${cls}"><select aria-label="${label}"><option>${value}</option></select></label>`;
const trackClass = t => `${t.color || 'blue'} ${t.selected ? 'sel' : ''}`;

// loudness envelope: [x, peak above the centre, peak below]
const envelope = [
    [0, 9, 9], [60, 13, 13], [90, 12, 12], [97, 28, 22], [106, 20, 20], [109, 60, 50], [118, 64, 58],
    [122, 24, 22], [126, 70, 60], [134, 62, 42], [138, 20, 18], [144, 7, 7], [150, 20, 15], [153, 70, 62],
    [163, 32, 34], [168, 22, 22], [175, 42, 38], [186, 26, 30], [200, 22, 18], [202, 78, 66], [214, 66, 56],
    [217, 12, 10], [228, 60, 46], [237, 66, 64], [242, 8, 8], [251, 68, 58], [260, 58, 50], [263, 18, 15],
    [271, 7, 7], [276, 16, 18], [282, 50, 40], [292, 32, 26], [301, 24, 20], [303, 84, 65], [330, 84, 66],
    [370, 76, 68], [450, 84, 66], [500, 94, 74], [530, 104, 82], [550, 76, 76], [568, 82, 58], [590, 88, 74],
    [610, 104, 94], [650, 88, 70], [700, 70, 46], [725, 74, 54], [740, 66, 76], [755, 76, 72], [780, 66, 50],
    [800, 68, 46], [835, 80, 56], [870, 64, 54], [900, 78, 48], [940, 84, 68], [1000, 84, 58], [1090, 86, 68],
    [1105, 106, 80], [1150, 112, 98], [1175, 98, 80], [1250, 106, 86], [1320, 112, 92], [1370, 94, 76],
    [1400, 110, 86], [1470, 104, 88], [1505, 96, 88], [1510, 58, 50], [1514, 52, 32], [1520, 46, 74], [1526, 84, 76],
    [1532, 46, 50], [1540, 80, 66], [1548, 50, 46], [1556, 34, 28]
];

function random(seed) {
    return () => {
        seed = (seed * 16807) % 2147483647;
        return seed / 2147483647;
    };
}

function level(x, side) {
    let i = 1;
    while (i < envelope.length - 1 && envelope[i][0] < x) i++;
    const a = envelope[i - 1];
    const b = envelope[i];
    const t = Math.min(1, (x - a[0]) / (b[0] - a[0]));
    return a[side] + (b[side] - a[side]) * t;
}

function waveform(seed) {
    const rnd = random(seed);
    const up = [];
    const down = [];
    for (let x = 0; x <= 1300; x += 2) {
        const pos = x * 1.197;
        let u = level(pos, 1);
        let d = level(pos, 2);
        if (pos < 302 || pos > 1506) {
            // thin passages flutter, bursts stay round
            const flutter = u < 35 ? 0.7 : 0.2;
            u *= 1 - flutter / 2 + flutter * rnd();
            d *= 1 - flutter / 2 + flutter * rnd();
        } else {
            // dense part: a rough edge with spikes on both sides
            u *= 0.86 + 0.18 * rnd();
            d *= 0.86 + 0.18 * rnd();
            if (rnd() > 0.8) u += 8 + 14 * rnd();
            if (rnd() > 0.85) u -= 10 + 14 * rnd();
            if (rnd() > 0.7) d += 8 + 22 * rnd();
        }
        up.push(`${x} ${(44 - Math.min(u / 3, 38 + 2 * rnd())).toFixed(1)}`);
        down.unshift(`${x} ${(44 + Math.min(d / 3, 38)).toFixed(1)}`);
    }
    return `<svg class="wf" viewBox="0 0 1300 88" preserveAspectRatio="none"><path d="M${up.join('L')}L${down.join('L')}Z"/></svg>`;
}

// track list
document.getElementById('trackList').innerHTML = tracks.map(t => `
    <li class="track-item ${t.selected ? 'sel' : ''}"><i></i><b class="${t.color ? 'lime' : ''}"></b>${icon('clip-wave')}${t.list}</li>
`).join('');

// rulers
const series = (count, format) => Array.from({ length: count }, (_, i) => `<span>${format(i)}</span>`).join('');
const two = n => String(n).padStart(2, '0');
const minutes = s => `${Math.floor(s / 60)}:${two(s % 60)}`;
const rulers = [
    { label: 'Bars|Beats', cls: 'bars', marks: series(12, i => 1 + i * 8), end: icon('upload') },
    { label: 'Min:Secs', cls: 'secs min', marks: series(19, i => minutes(i * 10)), lead: icon('rows') + '<i class="tri"></i>' },
    { label: 'Timecode', cls: 'timecode', marks: series(7, i => `00:${two(Math.floor(i / 2))}:${two(i % 2 * 30)}:00`) },
    { label: 'Samples', cls: 'samples', marks: series(9, i => i * 1000000) },
    {
        label: 'Tempo', cls: 'tempo', plus: true, lead: '<i class="expand">▶</i>',
        marks: '<svg viewBox="0 0 16 18"><path fill="#e03020" d="M0 4l6 5-6 5z"/><path fill="#fff" d="M14 1h2v14h-2z"/><ellipse cx="12.500" cy="14.500" rx="3.500" ry="3" fill="#fff"/></svg>120'
    },
    { label: 'Meter', cls: 'signature', plus: true, marks: 'Default: 4/4' },
    { label: 'Markers', cls: 'markers', plus: true, lead: icon('comment'), target: '<i class="target"></i>', marks: '' }
];

document.getElementById('rulers').innerHTML = rulers.map(r => `
    <div class="ruler ${r.cls}">
        <div class="ruler-label"><span class="lead">${r.lead || ''}</span><span>${r.label}</span><span>${r.target || ''}</span><span>${r.plus ? '+' : ''}</span></div>
        <div class="marks">${r.marks}</div>
        <div class="ruler-end">${r.end || ''}</div>
    </div>
`).join('');

// edit window tracks
document.getElementById('tracks').innerHTML = tracks.map((t, i) => `
    <div class="track ${trackClass(t)}" style="--clip: ${t.clip}; --wf: ${t.wf}">
        <div class="stripe"><button aria-label="Track options">▼</button>${icon('automation')}</div>
        <div class="controls">
            <div class="name-row"><b>${t.name}</b><i class="tri"></i></div>
            <div class="sq-row">
                <button class="sq rec" aria-label="Record"></button>
                <button class="sq">I</button>
                <button class="sq ${t.solo ? 'solo-on' : ''}">S</button>
                <button class="sq ${t.solo ? '' : 'mute-on'}">M</button>
            </div>
            ${dropdown('Track view', 'waveform', 'wide')}
            <div class="pill-row">
                <button class="pill star">*</button>
                <button class="pill">dyn</button>
                ${dropdown('Automation', 'read', 'green-text')}
            </div>
            <div class="pill-row">
                <button class="pill" aria-label="Timebase">${icon('clock')}</button>
                ${icon('metro')}
            </div>
        </div>
        <div class="meter"><i></i><i></i></div>
        <div class="side">
            <button class="first" aria-label="Playlist"></button>
            <button aria-label="Comments">${icon('comment')}</button>
            <button>+</button>
        </div>
        <div class="scale"></div>
        <div class="lane">
            <div class="clip">${waveform(4127 + i * 9731)}${waveform(61333 + i * 13127)}</div>
            <span class="clip-name">${t.name}</span>
            ${icon('fader', 'gain-icon')}
            <span class="clip-gain">0 dB</span>
        </div>
    </div>
`).join('');

// mixer strips, label positions in px from the top of the fader area
const faderMarks = [['12', 26], ['6', 59], ['0', 90], ['5', 115], ['10', 139], ['15', 164], ['20', 188], ['30', 219], ['40', 250], ['60', 266], ['∞', 284]];
const meterMarks = [['0', 18], ['5', 48], ['10', 78], ['15', 108], ['20', 138], ['25', 166], ['30', 196], ['35', 224], ['40', 254], ['50', 289], ['60', 305]];

function faderScale(t) {
    let ticks = '';
    for (let y = 31; y < 250; y += 5) ticks += `M26 ${y}h3`;
    const left = faderMarks.map(([text, y]) => `<text x="18" y="${y + 4}" text-anchor="end">${text}</text>`).join('');
    const right = meterMarks.map(([text, y]) => `<text x="66" y="${y + 4}" text-anchor="end">${text}</text>`).join('');
    return `<svg viewBox="0 0 100 321">
        <path stroke="#555" d="${ticks}"/>
        <path stroke="#888" d="${faderMarks.map(m => `M24 ${m[1]}h4`).join('')}${meterMarks.map(m => `M68 ${m[1]}h4`).join('')}"/>
        <path fill="#000" d="M30 24h2v260h-2zM73 5h17v7H73zM73 16h17v293H73z"/>
        <path fill="#3c0808" d="M74 6h7v5h-7zM82 6h7v5h-7z"/>
        <path fill="${t.color ? '#2c220e' : '#26260a'}" d="M74 17h7v120h-7zM82 17h7v120h-7z"/>
        <path fill="${t.color ? '#382a00' : '#343400'}" d="M74 137h7v171h-7zM82 137h7v171h-7z"/>
        ${left}${right}
    </svg>`;
}

const knob = `<svg viewBox="0 0 42 42">
    <path d="M9 34a18 18 0 1 1 27-3" fill="none" stroke="#3c4048" stroke-width="2"/>
    <circle cx="21" cy="21" r="16" fill="#101214"/>
    <circle cx="21" cy="21" r="14" fill="#24262a" stroke="#b8b8b8" stroke-width="2"/>
    <path d="M21 21l-9 8" stroke="#ccc" stroke-width="3"/>
    <circle cx="8" cy="35" r="3" fill="#2cb470"/>
</svg>`;

document.getElementById('strips').innerHTML = tracks.map((t, i) => `
    <div class="strip ${trackClass(t)}">
        <div class="bar-top"></div>
        <h3>INSERTS A-E</h3>
        <div class="slots">
            ${i ? '<div class="plug"><button>Trim</button></div>' : '<div><i></i></div>'}
            ${'<div><i></i></div>'.repeat(4)}
        </div>
        <h3 class="sends">SENDS A-E</h3>
        <div class="slots">${`<div>${icon('send')}</div>`.repeat(5)}</div>
        <h3 class="io-title">I / O</h3>
        <div class="io">
            ${dropdown('Input', 'no input')}
            <div class="out">${dropdown('Output', 'Out 1-2')}<button class="pill" aria-label="Output window">${icon('fader')}</button></div>
        </div>
        <h3 class="auto-title">AUTO</h3>
        <div class="io">${dropdown('Automation mode', 'auto read', 'green-text')}</div>
        <div class="lower">
            <div class="color-bar"></div>
            ${dropdown('Group', 'no group')}
            <div class="knobs">${knob}${knob}</div>
            <div class="pan"><span><small>◀</small> 100</span><span>100 <small>▶</small></span></div>
            <div class="pair"><button class="sq">I</button><button class="sq rec" aria-label="Record"></button></div>
            <div class="pair"><button class="sq ${t.solo ? 'solo-on' : ''}">S</button><button class="sq ${t.solo ? '' : 'mute-on'}">M</button></div>
            <div class="fader-area">
                ${faderScale(t)}
                <input type="range" min="0" max="100" value="74" aria-label="Volume">
            </div>
            <div class="volume">0.0</div>
            <div class="dyn-row"><span>▲<br>▼</span><button>dyn</button>${icon('clip-wave')}</div>
        </div>
        <div class="strip-name">${t.short}</div>
        <div class="notes"></div>
        <div class="bar-bottom"></div>
    </div>
`).join('');
```
